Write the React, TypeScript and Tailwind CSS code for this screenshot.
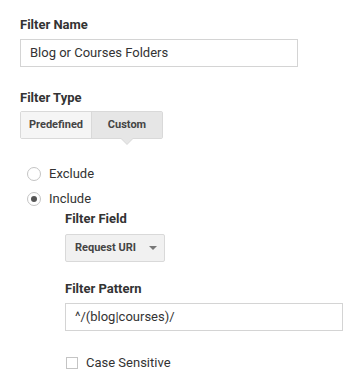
import React from "react";

export default function App() {
  return (
    <div className="w-[363px] h-[387px] bg-white text-[#333] font-['Roboto',sans-serif] relative">
      <div className="pl-[20px] pt-[16px] flex flex-col">
        <div className="text-[13px] font-bold leading-[18px] h-[18px]">Filter Name</div>
        <div className="mt-[5px] w-[278px] h-[28px] border border-[#d4d4d4] flex items-center pl-[9px] text-[13px]">
          Blog or Courses Folders
        </div>
        <div className="mt-[22px] text-[13px] font-bold leading-[18px] h-[18px]">Filter Type</div>
        <div className="mt-[4px] flex w-[143px] h-[28px] border border-[#d9d9d9] rounded-[2px] text-[11px] font-bold text-[#444]">
          <div className="w-[71px] flex items-center justify-center bg-[#f5f5f5] border-r border-[#d9d9d9]">Predefined</div>
          <div className="flex-1 flex items-center justify-center bg-[#e6e6e6] relative">
            Custom
            <div className="absolute left-1/2 -translate-x-1/2 top-full w-0 h-0 border-l-[7px] border-r-[7px] border-t-[7px] border-l-transparent border-r-transparent border-t-[#d9d9d9]" />
            <div className="absolute left-1/2 -translate-x-1/2 top-[100%] w-0 h-0 border-l-[6px] border-r-[6px] border-t-[6px] border-l-transparent border-r-transparent border-t-[#e6e6e6]" />
          </div>
        </div>
        <div className="mt-[28px] flex items-center h-[14px] ml-[7px]">
          <div className="w-[14px] h-[14px] rounded-full border border-[#c4c4c4] bg-white" />
          <span className="ml-[8px] text-[13px]">Exclude</span>
        </div>
        <div className="mt-[11px] flex items-center h-[14px] ml-[7px]">
          <div className="w-[14px] h-[14px] rounded-full border border-[#c4c4c4] bg-white flex items-center justify-center">
            <div className="w-[6px] h-[6px] rounded-full bg-[#555]" />
          </div>
          <span className="ml-[8px] text-[13px]">Include</span>
        </div>
        <div className="ml-[45px] flex flex-col">
          <div className="mt-[4px] text-[13px] font-bold leading-[18px] h-[18px]">Filter Field</div>
          <div className="mt-[6px] w-[100px] h-[28px] border border-[#d9d9d9] rounded-[2px] bg-[#f1f1f1] flex items-center pl-[9px] text-[11px] font-bold text-[#444]">
            Request URI
            <svg className="ml-[13px]" width="8" height="4" viewBox="0 0 8 4"><path d="M0 0 L8 0 L4 4 Z" fill="#777" /></svg>
          </div>
          <div className="mt-[18px] text-[13px] font-bold leading-[18px] h-[18px]">Filter Pattern</div>
          <div className="mt-[5px] w-[278px] h-[28px] border border-[#d4d4d4] flex items-center pl-[9px] text-[13px]">
            ^/(blog|courses)/
          </div>
          <div className="mt-[26px] flex items-center h-[12px] ml-[1px]">
            <div className="w-[12px] h-[12px] border border-[#c4c4c4] bg-white" />
            <span className="ml-[8px] text-[13px]">Case Sensitive</span>
          </div>
        </div>
      </div>
    </div>
  );
}
